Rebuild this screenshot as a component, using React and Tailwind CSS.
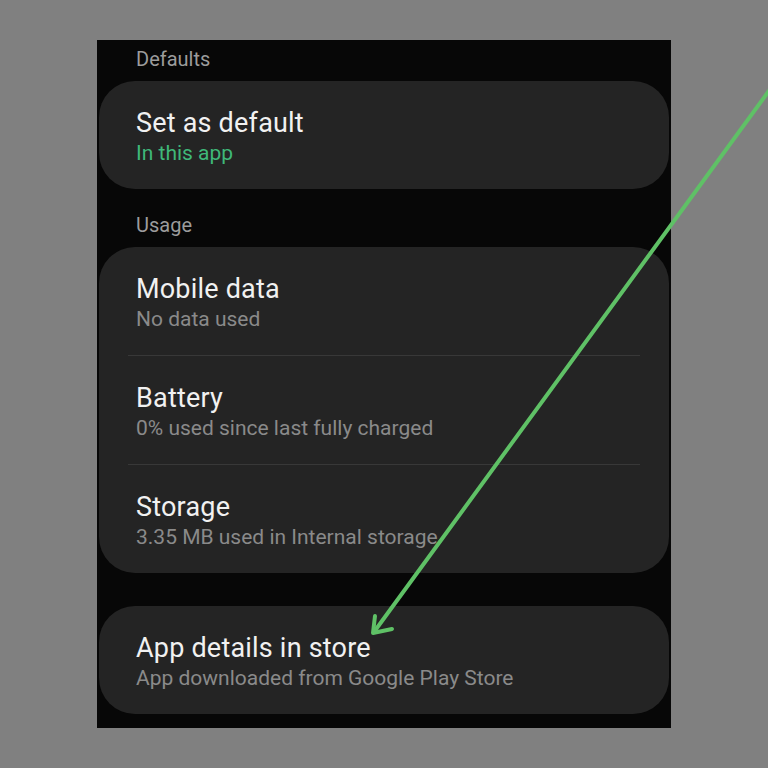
const font = { fontFamily: "Roboto, 'Liberation Sans', sans-serif" };

const Row = ({ title, sub, accent }) => (
    <div className="h-[108px] pl-[37px] pt-[26px]">
        <p className="text-[27px] leading-[32px] tracking-[0.2px] text-[#f1f1f1]">{title}</p>
        <p className={`mt-[1px] text-[21px] leading-[26px] ${accent ? "text-[#3fb879]" : "text-[#8a8a8a]"}`}>{sub}</p>
    </div>
);

const Divider = () => <div className="mx-[29px] h-px bg-[#383838]" />;

const Arrow = () => (
    <svg className="absolute left-0 top-0 pointer-events-none" width="768" height="768" viewBox="0 0 768 768">
        <g stroke="#5fc166" strokeWidth="4" strokeLinecap="round" strokeLinejoin="round" fill="none">
            <path d="M782 73 L374 632" />
            <path d="M375 616 L373 633 L392 629" />
        </g>
    </svg>
);

export default function App() {
    return (
        <div className="relative w-[768px] h-[768px] bg-[#808080] pt-[40px] pl-[97px]" style={font}>
            <div className="w-[574px] h-[688px] bg-[#070707] px-[2px] pt-[7px]">
                <div className="pl-[37px] h-[34px] text-[20px] leading-[24px] text-[#9c9c9c]">Defaults</div>
                <div className="rounded-[36px] bg-[#242424]">
                    <Row title="Set as default" sub="In this app" accent />
                </div>

                <div className="pl-[37px] h-[58px] flex items-end pb-[10px] text-[20px] leading-[24px] text-[#9c9c9c]">Usage</div>
                <div className="rounded-[36px] bg-[#242424]">
                    <Row title="Mobile data" sub="No data used" />
                    <Divider />
                    <Row title="Battery" sub="0% used since last fully charged" />
                    <Divider />
                    <Row title="Storage" sub="3.35 MB used in Internal storage" />
                </div>

                <div className="mt-[33px] rounded-[36px] bg-[#242424]">
                    <Row title="App details in store" sub="App downloaded from Google Play Store" />
                </div>
            </div>
            <Arrow />
        </div>
    );
}
